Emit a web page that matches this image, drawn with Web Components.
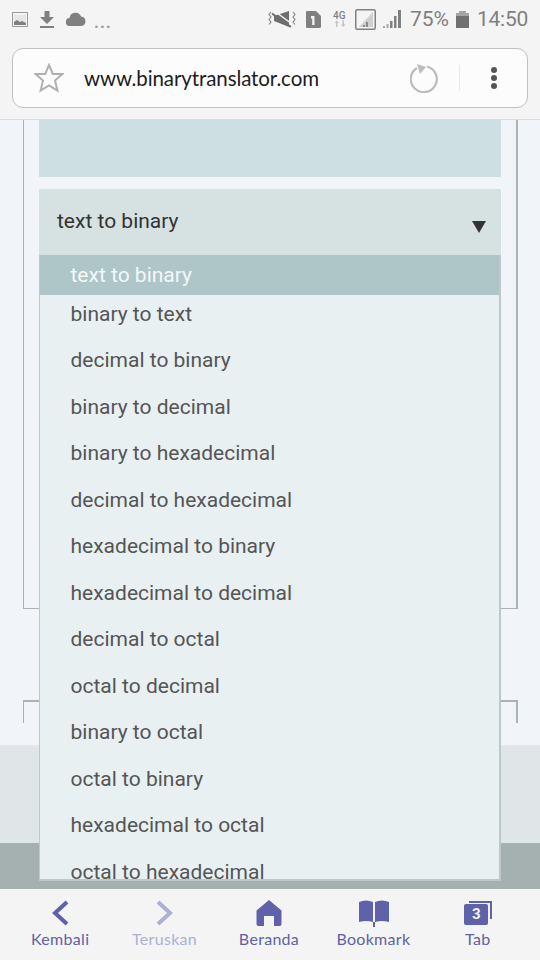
<!DOCTYPE html>
<html lang="en">
<head>
<meta charset="utf-8">
<title>binarytranslator.com</title>
<style>
  html, body { margin: 0; padding: 0; }
  body { width: 540px; height: 960px; overflow: hidden; font-family: Roboto, "Liberation Sans", sans-serif; background: #f1f5f9; display: flex; flex-direction: column; }
</style>
</head>
<body>
<status-bar></status-bar>
<url-bar>www.binarytranslator.com</url-bar>
<page-view>
  <convert-select value="text to binary">
    <span>binary to text</span>
    <span>decimal to binary</span>
    <span>binary to decimal</span>
    <span>binary to hexadecimal</span>
    <span>decimal to hexadecimal</span>
    <span>hexadecimal to binary</span>
    <span>hexadecimal to decimal</span>
    <span>decimal to octal</span>
    <span>octal to decimal</span>
    <span>binary to octal</span>
    <span>octal to binary</span>
    <span>hexadecimal to octal</span>
    <span>octal to hexadecimal</span>
  </convert-select>
</page-view>
<bottom-nav>
  <nav-item label="Kembali"><svg width="24" height="28" viewBox="0 0 24 28"><path d="M19 3 7 14l12 11" fill="none" stroke="currentColor" stroke-width="4"/></svg></nav-item>
  <nav-item label="Teruskan" disabled><svg width="24" height="28" viewBox="0 0 24 28"><path d="M5 3l12 11L5 25" fill="none" stroke="currentColor" stroke-width="4"/></svg></nav-item>
  <nav-item label="Beranda"><svg width="30" height="28" viewBox="0 0 30 28"><path d="M15 1 2.500 11.500V25q0 2 2 2H10V17h10v10h5.500q2 0 2-2V11.500z" fill="currentColor"/></svg></nav-item>
  <nav-item label="Bookmark"><svg style="margin-left:1px" width="32" height="28" viewBox="0 0 32 28"><path d="M1 3q7-3 14 0v20q-7-2-14 0zM17 3q7-3 14 0v20q-7-2-14 0v5h-2v-5h2z" fill="currentColor"/></svg></nav-item>
  <nav-item label="Tab"><tab-count>3</tab-count></nav-item>
</bottom-nav>

<script>
class StatusBar extends HTMLElement {
  connectedCallback() {
    this.attachShadow({ mode: 'open' }).innerHTML = `
      <style>
        :host { display: flex; align-items: center; height: 38px; background: #f4f4f4; color: #808080; padding: 0 12px; font: 21px Roboto, sans-serif; box-sizing: border-box; }
        svg { display: block; fill: currentColor; flex: none; }
        .left { display: flex; align-items: center; gap: 11px; }
        .right { margin-left: auto; display: flex; align-items: center; }
        .dots { font: 700 17px/20px Roboto, sans-serif; letter-spacing: 1px; margin-top: 6px; margin-left: -3px; color: #999; }
      </style>
      <div class="left">
        <svg width="16" height="15" viewBox="0 0 16 15"><path d="M.5.5h15v14H.5z" fill="none" stroke="#999"/><path d="M2 3h12v10H2z" fill="#e6e6e6"/><path d="M2 13v-3l3-2 3 2 2-1 4 2v2z"/></svg>
        <svg width="16" height="17" viewBox="0 0 16 17"><path d="M5.500 0h5v6H15l-7 7-7-7h4.500zM1 15h14v2H1z"/></svg>
        <svg width="20" height="14" viewBox="0 0 20 14"><path d="M4 14a4 4 0 0 1-.5-8A6 6 0 0 1 15 4.500 4.800 4.800 0 0 1 15.500 14z"/></svg>
        <span class="dots">...</span>
      </div>
      <div class="right">
        <svg width="28" height="18" viewBox="0 0 28 18"><path d="M3 2 1 4.500l2 2.500-2 2.500 2 2.500-2 2.500M25 2l2 2.500L25 7l2 2.500L25 12l2 2.500" fill="none" stroke="#8a8a8a" stroke-width="1.200"/><path d="M6 6 21 1v16L6 11z" fill="#6e6e6e"/><path d="M5 2 24 16" stroke="#f4f4f4" stroke-width="1.500" transform="translate(0 -2)"/><path d="M4 3.500 23 17" stroke="#6e6e6e" stroke-width="2"/></svg>
        <svg style="margin-left:9px" width="16" height="17" viewBox="0 0 16 17"><path d="M2 0h9l5 5v10.500q0 1.500-1.500 1.500h-12Q1 17 1 15.500V1q0-1 1-1z"/><path d="M6 5h3.500v9H7.200V7.500H6z" fill="#f4f4f4"/></svg>
        <svg style="margin-left:12px" width="16" height="18" viewBox="0 0 16 18"><text x="0" y="8.500" font-family="Roboto, sans-serif" font-size="10" font-weight="500">4G</text><path d="M3 17v-4H1.500l2.200-2.500L6 13H4.500v4zM11 10.500v4h1.500L10.300 17 8 14.500h1.500v-4z" fill="#c4c4c4"/></svg>
        <svg style="margin-left:6px" width="21" height="21" viewBox="0 0 21 21"><rect x=".75" y=".75" width="19.500" height="19.500" rx="1.500" fill="none" stroke="currentColor" stroke-width="1.500"/><path d="M18 3v15H4z" fill="#d0d0d0"/><path d="M8 18v-2h2v2zM11 18v-5h2v5z" fill="#8a8a8a"/></svg>
        <svg style="margin-left:7px" width="18" height="18" viewBox="0 0 18 18"><path d="M0 16h2v2H0zM3.500 14h2v4h-2z" fill="#a8a8a8"/><path d="M7 11h2.500v7H7zM11 6h2.500v12H11zM15 0h3v18h-3z"/></svg>
        <span style="margin-left:9px">75%</span>
        <svg style="margin-left:7px" width="13" height="17" viewBox="0 0 13 17"><path d="M3 2V0h7v2zM0 2h13v3H0z" fill="#a4a4a4"/><path d="M0 5h13v12H0z" fill="#707070"/></svg>
        <span style="margin-left:8px;letter-spacing:-.25px">14:50</span>
      </div>`;
  }
}

class UrlBar extends HTMLElement {
  connectedCallback() {
    this.attachShadow({ mode: 'open' }).innerHTML = `
      <style>
        :host { display: block; height: 82px; background: #f4f4f4; padding: 10px 12px 0; box-sizing: border-box; border-bottom: 1px solid #dcdcdc; }
        .box { height: 60px; box-sizing: border-box; border: 1.5px solid #c0c0c0; border-radius: 11px; background: #fcfcfc; display: flex; align-items: center; padding-left: 21px; }
        svg { display: block; flex: none; }
        .url { margin-left: 20px; font: 20.500px Lato, sans-serif; color: #1d1d1d; white-space: nowrap; letter-spacing: -.1px; }
        .reload { margin-left: auto; }
        .sep { width: 1px; height: 26px; background: #e8e8e8; margin-left: 19px; }
        .more { margin: 0 29.500px 0 30px; }
      </style>
      <div class="box">
        <svg width="30" height="30" viewBox="0 0 30 30"><path d="M15 2l3.800 9h9.700l-7.500 6.600 2.400 10L15 22.400l-8.400 5.200 2.400-10L1.500 11h9.700z" fill="none" stroke="#b0b0b0" stroke-width="2"/></svg>
        <span class="url"><slot></slot></span>
        <svg class="reload" width="30" height="30" viewBox="0 0 30 30"><path d="M17 3.500A13 13 0 1 1 7 5" fill="none" stroke="#bcbcbc" stroke-width="2.200"/><path d="M7 1l9 3-6 7z" fill="#bcbcbc"/></svg>
        <div class="sep"></div>
        <svg class="more" width="8" height="24" viewBox="0 0 8 24"><circle cx="4" cy="4" r="3" fill="#555"/><circle cx="4" cy="12" r="3" fill="#555"/><circle cx="4" cy="20" r="3" fill="#555"/></svg>
      </div>`;
  }
}

class PageView extends HTMLElement {
  connectedCallback() {
    this.attachShadow({ mode: 'open' }).innerHTML = `
      <style>
        :host { display: flex; flex-direction: column; flex: 1; min-height: 0; background: #f1f5f9; }
        .panel { height: 489px; box-sizing: border-box; margin: 0 22px 0 23px; padding: 0 15px; border: solid #a8b4b4; border-width: 0 2px 1px 1px; }
        .input { height: 57px; background: #cddfe2; margin-bottom: 12px; }
        .stub { height: 23px; box-sizing: border-box; margin: 91px 22px 22px 23px; border: solid #a8b4b4; border-width: 2px 2px 0 1px; }
        .foot { height: 98px; background: #e0e5e8; border-top: 1px solid #e4e8eb; box-sizing: border-box; }
        .foot2 { height: 46px; background: #a5b0b0; }
      </style>
      <div class="panel">
        <div class="input"></div>
        <slot></slot>
      </div>
      <div class="stub"></div>
      <div class="foot"></div>
      <div class="foot2"></div>`;
  }
}

class ConvertSelect extends HTMLElement {
  connectedCallback() {
    const value = this.getAttribute('value');
    this.attachShadow({ mode: 'open' }).innerHTML = `
      <style>
        :host { display: block; position: relative; font: 21px Roboto, sans-serif; }
        .current { height: 66px; box-sizing: border-box; background: #d5e2e1; color: #333; padding: 0 0 2px 18px; display: flex; align-items: center; }
        .arrow { margin-left: auto; margin-right: 15px; margin-top: 12px; width: 0; height: 0; border: solid transparent; border-width: 12px 7.500px 0; border-top-color: #333; }
        .menu { position: absolute; z-index: 2; left: 0; right: 0; top: 66px; height: 626px; box-sizing: border-box; overflow: hidden; background: #e8f0f2; border: solid #bcc8ca; border-width: 0 2px 2px 1px; color: #555; }
        .selected { height: 40px; line-height: 41px; padding-left: 30.500px; background: #aec6c8; color: #f3f8f8; margin-bottom: -4.250px; }
        ::slotted(span) { display: block; height: 46.500px; line-height: 46.500px; padding-left: 30.500px; white-space: nowrap; }
      </style>
      <div class="current">${value}<span class="arrow"></span></div>
      <div class="menu">
        <div class="selected">${value}</div>
        <slot></slot>
      </div>`;
  }
}

class BottomNav extends HTMLElement {
  connectedCallback() {
    this.attachShadow({ mode: 'open' }).innerHTML = `
      <style>
        :host { display: grid; grid-template-columns: repeat(5, 1fr); height: 71px; padding: 0 10px 0 8px; background: #f4f4f4; flex: none; }
      </style>
      <slot></slot>`;
  }
}

class NavItem extends HTMLElement {
  connectedCallback() {
    this.attachShadow({ mode: 'open' }).innerHTML = `
      <style>
        :host { display: flex; flex-direction: column; align-items: center; padding-top: 10px; box-sizing: border-box; color: #5f62a8; }
        :host([disabled]) { color: #adb0d6; }
        .icon { height: 28px; display: flex; align-items: center; }
        .label { font: 16px/18px Lato, sans-serif; margin-top: 3px; letter-spacing: .3px; white-space: nowrap; }
      </style>
      <div class="icon"><slot></slot></div>
      <div class="label">${this.getAttribute('label')}</div>`;
  }
}

class TabCount extends HTMLElement {
  connectedCallback() {
    this.attachShadow({ mode: 'open' }).innerHTML = `
      <style>
        :host { display: block; position: relative; width: 28px; height: 24px; margin: -1px 0 0 1px; }
        .back { position: absolute; right: 0; top: 0; width: 23px; height: 18px; box-sizing: border-box; border: solid #5f62a8; border-width: 2px 2px 0 0; }
        .front { position: absolute; left: 0; bottom: 0; width: 24px; height: 21px; border-radius: 2px; background: #5f62a8; color: #f4f4f4; text-align: center; font: 700 15px/21px Roboto, sans-serif; }
      </style>
      <div class="back"></div>
      <div class="front"><slot></slot></div>`;
  }
}

customElements.define('status-bar', StatusBar);
customElements.define('url-bar', UrlBar);
customElements.define('page-view', PageView);
customElements.define('convert-select', ConvertSelect);
customElements.define('bottom-nav', BottomNav);
customElements.define('nav-item', NavItem);
customElements.define('tab-count', TabCount);
</script>
</body>
</html>
